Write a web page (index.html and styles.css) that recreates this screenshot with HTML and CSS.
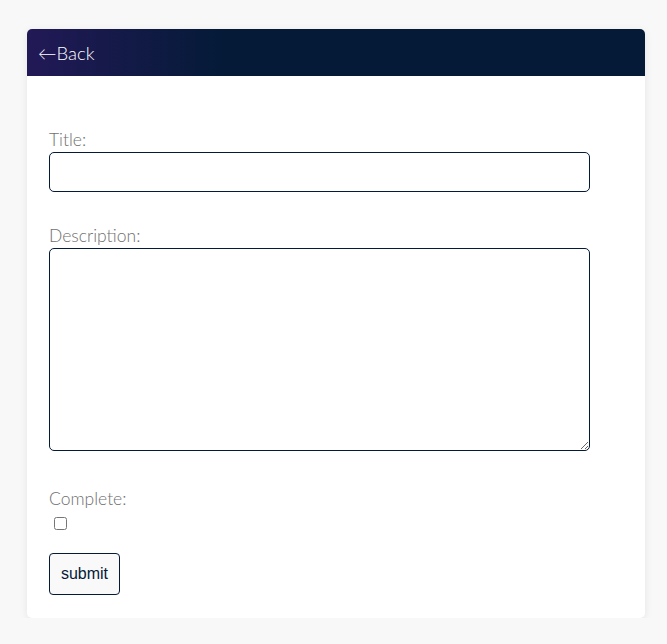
FILE: index.html
```html
<!DOCTYPE html>
<html>
<head>
<meta charset="utf-8">
<link rel="stylesheet" href="styles.css">
</head>
<body>
<div class="card">
  <div class="header"><a class="back">←Back</a></div>
  <form class="form">
    <label class="label" for="t">Title:</label>
    <input class="input" id="t" type="text">
    <label class="label label-desc" for="d">Description:</label>
    <textarea class="textarea" id="d"></textarea>
    <label class="label label-complete" for="c">Complete:</label>
    <div class="check-row"><input class="check" id="c" type="checkbox"></div>
    <button class="submit" type="button">submit</button>
  </form>
</div>
</body>
</html>
```
FILE: styles.css
```css
html, body {
  margin: 0;
  padding: 0;
  background: #f8f8f8;
}
body {
  font-family: "Lato", "Open Sans", sans-serif;
  padding: 29px 22px 0 27px;
}
.card {
  background: #ffffff;
  border-radius: 5px;
  box-shadow: 0 2px 8px rgba(0,0,0,0.08);
  overflow: hidden;
}
.header {
  height: 47px;
  background: linear-gradient(90deg, #221957 0%, #041a37 32%, #041a37 100%);
  display: flex;
  align-items: center;
  padding-left: 11px;
}
.back {
  color: #ffffff;
  font-size: 18.5px;
  font-weight: 300;
  text-decoration: none;
}
.form {
  display: flex;
  flex-direction: column;
  align-items: flex-start;
  padding: 53px 22px 23px 22px;
}
.label {
  font-size: 17.5px;
  font-weight: 300;
  color: #6f6f6f;
  line-height: 21px;
  margin-bottom: 2px;
}
.input {
  box-sizing: border-box;
  width: 541px;
  height: 40px;
  border: 1px solid #041a37;
  border-radius: 5px;
  margin: 0;
}
.label-desc {
  margin-top: 33px;
}
.textarea {
  box-sizing: border-box;
  width: 541px;
  height: 203px;
  border: 1px solid #041a37;
  border-radius: 5px;
  margin: 0;
  resize: vertical;
}
.label-complete {
  margin-top: 37px;
  margin-bottom: 0;
}
.check-row {
  display: flex;
  padding-top: 8px;
}
.check {
  margin: 0 0 0 5px;
  width: 13px;
  height: 13px;
}
.submit {
  margin-top: 23px;
  width: 71px;
  height: 42px;
  border: 1px solid #041a37;
  border-radius: 4px;
  background: #f9f9f9;
  color: #041a37;
  font-family: "Liberation Sans", Arial, sans-serif;
  font-size: 16px;
  padding: 0;
}
```
